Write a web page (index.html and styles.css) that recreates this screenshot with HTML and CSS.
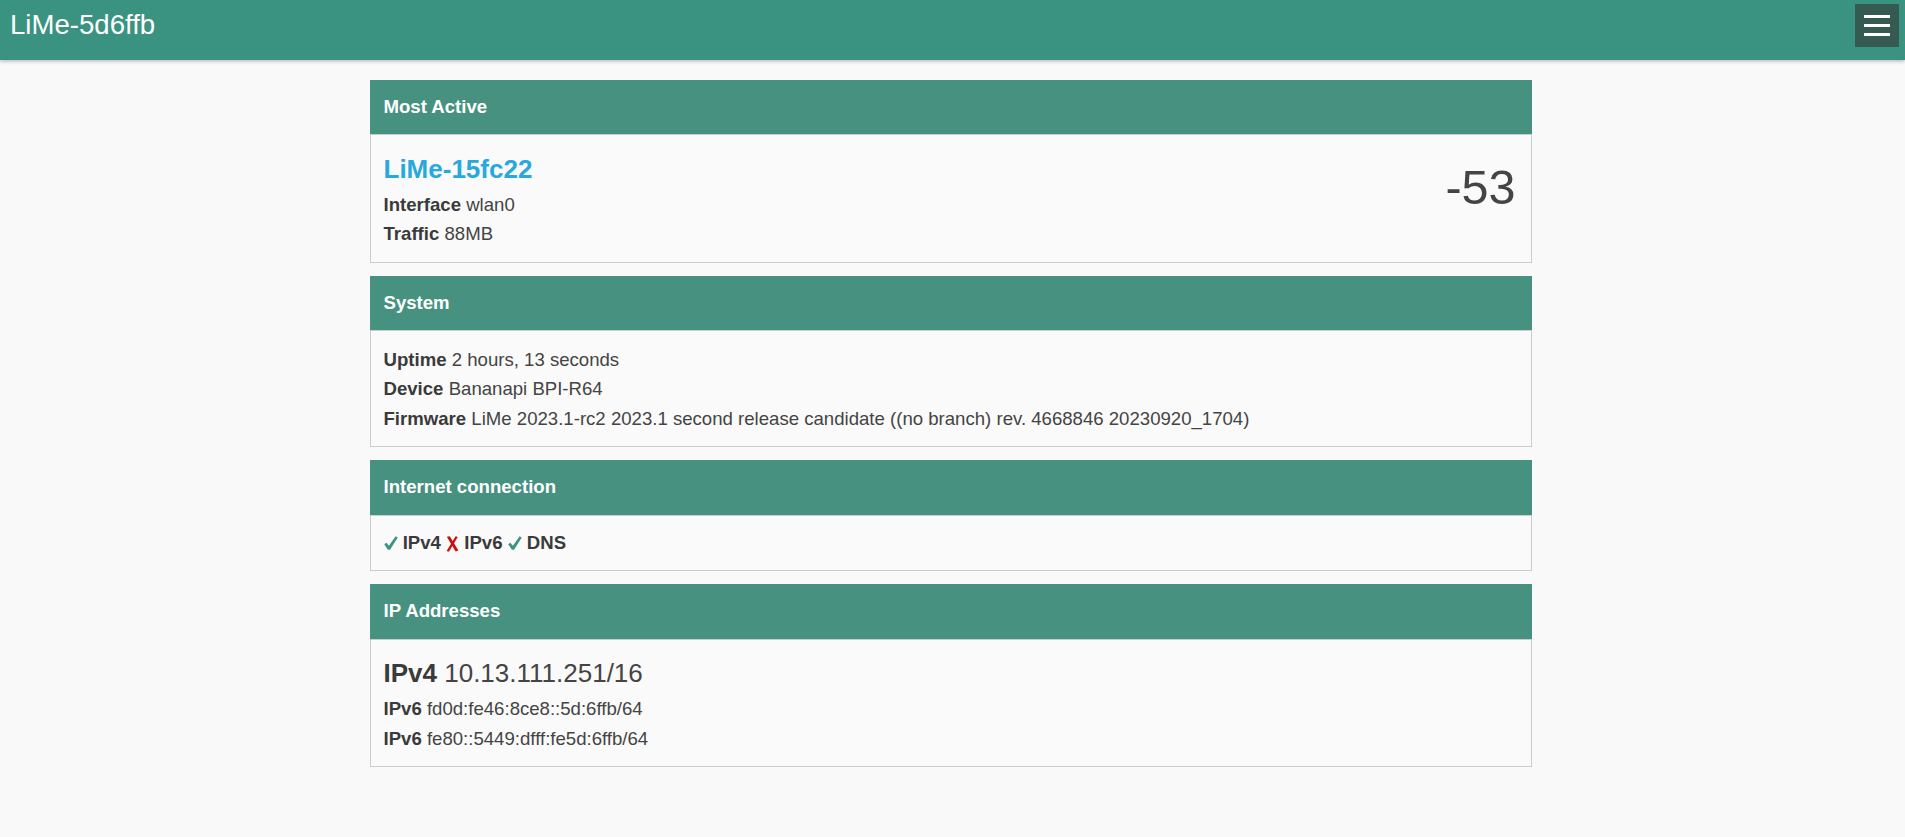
FILE: index.html
```html
<!DOCTYPE html>
<html lang="en">
<head>
<meta charset="utf-8">
<title>LiMe-5d6ffb</title>
<link rel="stylesheet" href="styles.css">
</head>
<body>
<header class="topbar">
  <div class="brand">LiMe-5d6ffb</div>
  <button class="menu-btn" aria-label="Menu"><span></span><span></span><span></span></button>
</header>
<main class="container">
  <section class="card">
    <div class="card-header">Most Active</div>
    <div class="card-body active-body">
      <div class="active-info">
        <div class="node-name">LiMe-15fc22</div>
        <div class="line"><b>Interface</b> wlan0</div>
        <div class="line"><b>Traffic</b> 88MB</div>
      </div>
      <div class="signal">-53</div>
    </div>
  </section>
  <section class="card">
    <div class="card-header">System</div>
    <div class="card-body">
      <div class="line"><b>Uptime</b> 2 hours, 13 seconds</div>
      <div class="line"><b>Device</b> Bananapi BPI-R64</div>
      <div class="line"><b>Firmware</b> LiMe 2023.1-rc2 2023.1 second release candidate ((no branch) rev. 4668846 20230920_1704)</div>
    </div>
  </section>
  <section class="card">
    <div class="card-header">Internet connection</div>
    <div class="card-body">
      <div class="line conn">
        <svg class="mark ok" viewBox="0 0 14 14" width="14" height="14" aria-label="✓"><path d="M0.2 8.2 L2.4 6.8 L4.9 9.8 L11.6 0.2 L13.8 1.4 L6 13.8 L3.9 13.8 Z"/></svg>
        <b>IPv4</b>
        <svg class="mark fail" viewBox="0 0 13 16" width="13" height="16" aria-label="✗"><path d="M0.8 0.8 L3.8 0.2 L12.4 14.6 L9.6 15.6 Z"/><path d="M9.6 0.2 L11.8 0.9 L2.9 15.8 L0.6 15.1 Z"/></svg>
        <b>IPv6</b>
        <svg class="mark ok" viewBox="0 0 14 14" width="14" height="14" aria-label="✓"><path d="M0.2 8.2 L2.4 6.8 L4.9 9.8 L11.6 0.2 L13.8 1.4 L6 13.8 L3.9 13.8 Z"/></svg>
        <b>DNS</b>
      </div>
    </div>
  </section>
  <section class="card">
    <div class="card-header">IP Addresses</div>
    <div class="card-body">
      <div class="ip-main"><b>IPv4</b> 10.13.111.251/16</div>
      <div class="line"><b>IPv6</b> fd0d:fe46:8ce8::5d:6ffb/64</div>
      <div class="line"><b>IPv6</b> fe80::5449:dfff:fe5d:6ffb/64</div>
    </div>
  </section>
</main>
</body>
</html>
```

FILE: styles.css
```css
* { box-sizing: border-box; }

html, body {
  margin: 0;
  padding: 0;
}

body {
  background: #f9f9f9;
  color: #444;
  font-family: "Liberation Sans", Arial, sans-serif;
  font-size: 18.6px;
  line-height: 1.58;
}

.topbar {
  height: 60px;
  background: #3a9280;
  display: flex;
  align-items: flex-start;
  justify-content: space-between;
  box-shadow: 0 1px 4px rgba(0, 0, 0, 0.3);
  position: relative;
}

.brand {
  color: #fff;
  font-size: 27.6px;
  line-height: 1;
  padding: 11px 0 0 10px;
}

.menu-btn {
  width: 44px;
  height: 43px;
  margin: 4px 6px 0 0;
  background: #355a51;
  border: none;
  padding: 0;
  display: flex;
  flex-direction: column;
  align-items: center;
  justify-content: center;
  gap: 6px;
}

.menu-btn span {
  display: block;
  width: 26px;
  height: 3px;
  background: #fff;
}

.container {
  width: 1162px;
  margin: 20px 0 0 calc(50% - 583px);
}

.card {
  border: 1px solid #ccc;
  background: #fafafa;
  margin-bottom: 13px;
}

.card-header {
  background: #46917f;
  color: #fff;
  font-weight: bold;
  margin: -1px -1px 0;
  padding: 12px 14px 13px;
  border-bottom: 1px solid #ccc;
}

.card-body {
  padding: 13.4px 13px 13.4px 13px;
}

.active-body {
  display: flex;
  justify-content: space-between;
  align-items: flex-start;
}

.node-name {
  color: #27a9dd;
  font-weight: bold;
  font-size: 26px;
}

.signal {
  font-size: 48.5px;
  line-height: 1.6;
  margin-right: 2px;
}

b {
  color: #3a3a3a;
}

.conn {
  line-height: 1.5;
}

.mark {
  display: inline-block;
  vertical-align: -1px;
}

.mark.fail {
  vertical-align: -3px;
}

.ok { fill: #3c9582; }

.fail { fill: #cc1010; }

.ip-main {
  font-size: 26px;
}
```
